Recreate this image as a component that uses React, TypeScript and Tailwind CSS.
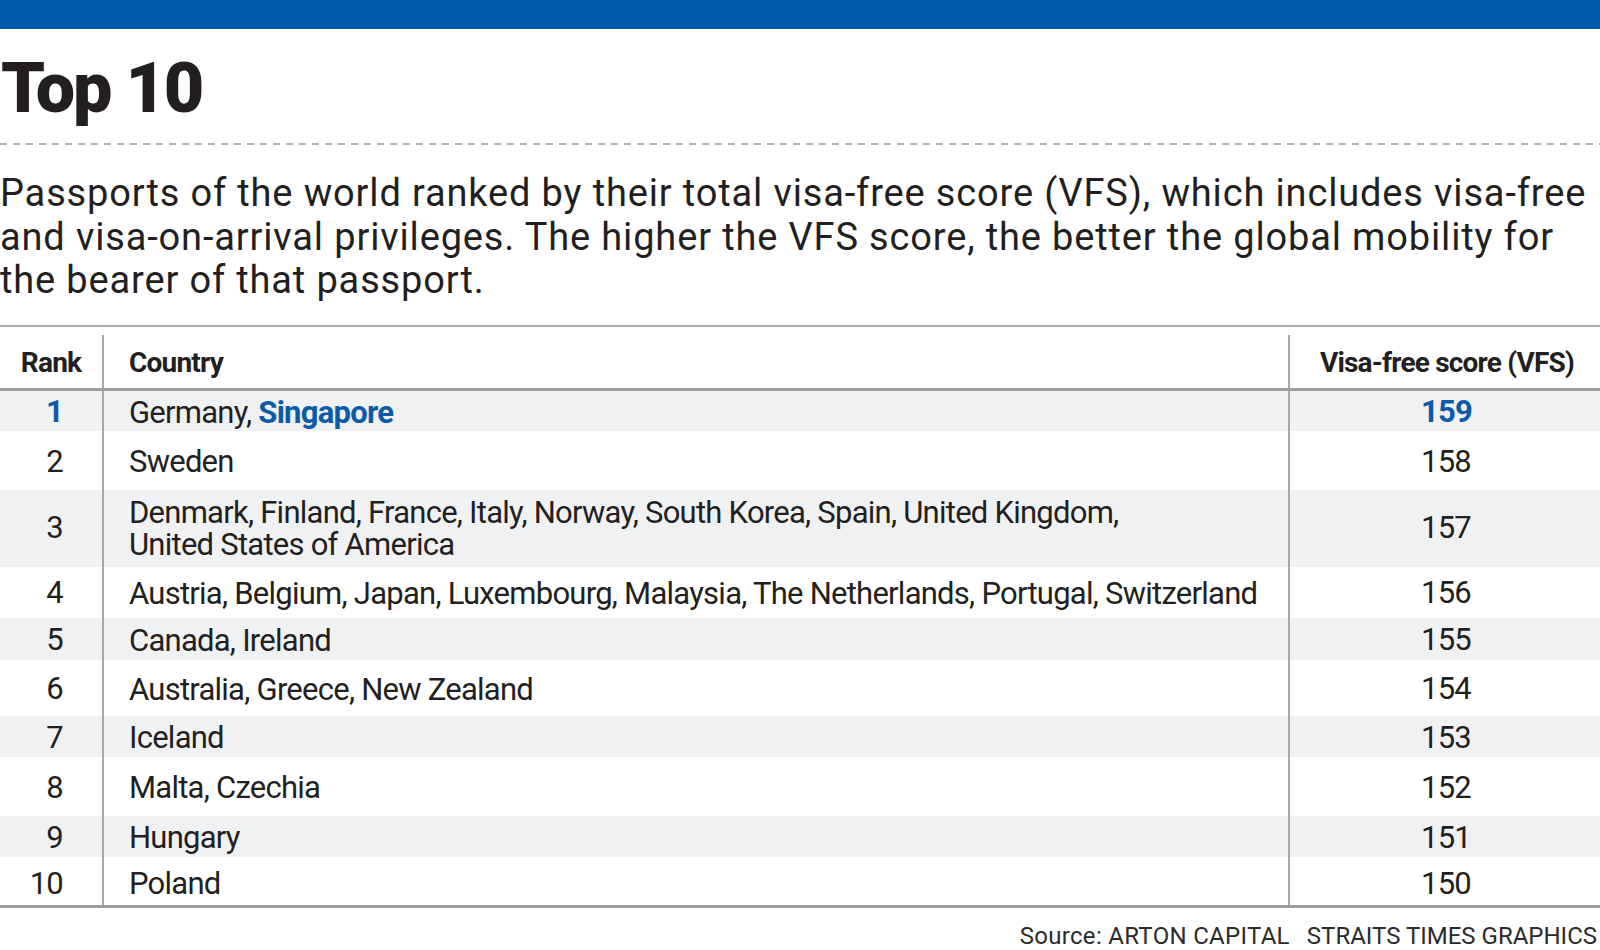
import React from 'react';

// Rows of the ranking table. Heights follow the printed graphic: shaded rows are
// a little tighter than the white ones.
type Row = {
  rank: string;
  score: string;
  lines: React.ReactNode;
  height: string;
  pad: string;
  shaded: boolean;
  highlight?: boolean;
};

const ROWS: Row[] = [
  {
    rank: '1',
    score: '159',
    lines: (
      <>
        Germany, <span className="font-bold text-[#0b5ba8]">Singapore</span>
      </>
    ),
    height: 'h-[40px]',
    pad: 'pt-[3px]',
    shaded: true,
    highlight: true,
  },
  { rank: '2', score: '158', lines: 'Sweden', height: 'h-[59px]', pad: 'pt-[3px]', shaded: false },
  {
    rank: '3',
    score: '157',
    lines: (
      <>
        Denmark, Finland, France, Italy, Norway, South Korea, Spain, United Kingdom,
        <br />
        United States of America
      </>
    ),
    height: 'h-[77px]',
    pad: 'pt-0',
    shaded: true,
  },
  {
    rank: '4',
    score: '156',
    lines: 'Austria, Belgium, Japan, Luxembourg, Malaysia, The Netherlands, Portugal, Switzerland',
    height: 'h-[51px]',
    pad: 'pt-[2px]',
    shaded: false,
  },
  { rank: '5', score: '155', lines: 'Canada, Ireland', height: 'h-[42px]', pad: 'pt-[3px]', shaded: true },
  { rank: '6', score: '154', lines: 'Australia, Greece, New Zealand', height: 'h-[56px]', pad: 'pt-[3px]', shaded: false },
  { rank: '7', score: '153', lines: 'Iceland', height: 'h-[41px]', pad: 'pt-[3px]', shaded: true },
  { rank: '8', score: '152', lines: 'Malta, Czechia', height: 'h-[59px]', pad: 'pt-[3px]', shaded: false },
  { rank: '9', score: '151', lines: 'Hungary', height: 'h-[41px]', pad: 'pt-[3px]', shaded: true },
  { rank: '10', score: '150', lines: 'Poland', height: 'h-[48px]', pad: 'pt-[6px]', shaded: false },
];

const TableRow = ({ row }: { row: Row }) => (
  <div className={`flex ${row.height} ${row.shaded ? 'bg-[#f0f1f3]' : 'bg-white'}`}>
    <div
      className={`w-[104px] shrink-0 flex items-center justify-end pr-[39px] ${row.pad} border-r-2 border-[#a8a8a8] ${
        row.highlight ? 'font-bold text-[#0b5ba8]' : ''
      }`}
    >
      {row.rank}
    </div>
    <div className={`flex-1 flex items-center pl-[25px] ${row.pad} border-r-2 border-[#a8a8a8] leading-[32px]`}>
      <div>{row.lines}</div>
    </div>
    <div
      className={`w-[310px] shrink-0 flex items-center pl-[131px] ${row.pad} ${
        row.highlight ? 'font-bold text-[#0b5ba8]' : ''
      }`}
    >
      {row.score}
    </div>
  </div>
);

export default function App() {
  return (
    <div className="w-[1600px] h-[950px] bg-white text-[#231f20] font-['Roboto',sans-serif] overflow-hidden">
      {/* top brand bar */}
      <div className="h-[29px] bg-[#005aab]" />

      {/* headline */}
      <div className="h-[114px] pt-[24px] pl-[1px]">
        <h1 className="text-[70px] leading-[70px] font-black tracking-[-2.2px]">Top 10</h1>
      </div>

      {/* dashed rule */}
      <div className="h-[2px] bg-[repeating-linear-gradient(90deg,#b3b3b3_0px,#b3b3b3_7px,transparent_7px,transparent_13px)]" />

      {/* intro */}
      <div className="h-[180px] pt-[27px]">
        <p className="text-[38px] leading-[43.5px] tracking-[0.85px] whitespace-nowrap">
          Passports of the world ranked by their total visa-free score (VFS), which includes visa-free
          <br />
          and visa-on-arrival privileges. The higher the VFS score, the better the global mobility for
          <br />
          the bearer of that passport.
        </p>
      </div>

      {/* table */}
      <div className="border-t-2 border-[#ababab] text-[31px] tracking-[-0.75px]">
        <div className="flex h-[64px] items-end border-b-[3px] border-[#9c9c9c] font-bold text-[28px] tracking-[-0.8px]">
          <div className="w-[104px] h-[53px] pt-[2px] flex items-center justify-center border-r-2 border-[#a8a8a8]">
            Rank
          </div>
          <div className="flex-1 h-[53px] pt-[2px] flex items-center pl-[25px] border-r-2 border-[#a8a8a8]">
            Country
          </div>
          <div className="w-[310px] h-[53px] pt-[2px] pl-[4px] flex items-center justify-center">
            Visa-free score (VFS)
          </div>
        </div>
        <div className="border-b-[3px] border-[#9c9c9c]">
          {ROWS.map((row) => (
            <TableRow key={row.rank} row={row} />
          ))}
        </div>
      </div>

      {/* credits */}
      <div className="flex justify-end gap-[17px] pt-[16px] pr-[3px] text-[24px] leading-[24px] text-[#2b2b2b]">
        <span className="tracking-[0.3px]">Source: ARTON CAPITAL</span>
        <span>STRAITS TIMES GRAPHICS</span>
      </div>
    </div>
  );
}
